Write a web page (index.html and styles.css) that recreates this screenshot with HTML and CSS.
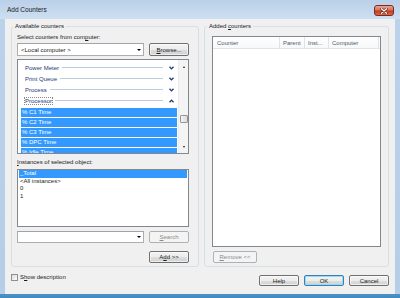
FILE: index.html
```html
<!DOCTYPE html>
<html lang="en">
<head>
	<meta charset="UTF-8">
	<title>Add Counters</title>
	<link rel="stylesheet" href="styles.css">
</head>
<body>
	<div class="window">
		<div class="titlebar">
			<span class="title">Add Counters</span>
			<span class="close">
				<svg width="8" height="6" viewBox="0 0 8 6"><path d="M1.5 0.8 L6.5 5.2 M6.5 0.8 L1.5 5.2" stroke="#5a1a10" stroke-width="2.4" stroke-linecap="round"/><path d="M1.5 0.8 L6.5 5.2 M6.5 0.8 L1.5 5.2" stroke="#fff" stroke-width="1.3" stroke-linecap="round"/></svg>
			</span>
		</div>
		<div class="frame">
			<div class="client">
				<div class="groups">
					<fieldset class="group left">
						<legend>Available counters</legend>
						<div class="label">Select counters from com<u>p</u>uter:</div>
						<div class="row top">
							<div class="combo"><span>&lt;Local computer &gt;</span><i class="drop"></i></div>
							<button class="btn"><u>B</u>rowse...</button>
						</div>
						<div class="objects">
							<div class="objlist">
								<div class="grp"><span>Power Meter</span><i class="rule"></i><svg class="chev" width="5" height="4" viewBox="0 0 5 4"><path d="M0.5 0.7 L2.5 2.9 L4.5 0.7" fill="none" stroke="#1e3a75" stroke-width="1.3"/></svg></div>
								<div class="grp"><span>Print Queue</span><i class="rule"></i><svg class="chev" width="5" height="4" viewBox="0 0 5 4"><path d="M0.5 0.7 L2.5 2.9 L4.5 0.7" fill="none" stroke="#1e3a75" stroke-width="1.3"/></svg></div>
								<div class="grp"><span>Process</span><i class="rule"></i><svg class="chev" width="5" height="4" viewBox="0 0 5 4"><path d="M0.5 0.7 L2.5 2.9 L4.5 0.7" fill="none" stroke="#1e3a75" stroke-width="1.3"/></svg></div>
								<div class="grp"><span class="focus">Processor</span><i class="rule"></i><svg class="chev" width="5" height="4" viewBox="0 0 5 4"><path d="M0.5 3.3 L2.5 1.1 L4.5 3.3" fill="none" stroke="#1e3a75" stroke-width="1.3"/></svg></div>
								<div class="items">
									<div class="item">% C1 Time</div>
									<div class="item">% C2 Time</div>
									<div class="item">% C3 Time</div>
									<div class="item">% DPC Time</div>
									<div class="item">% Idle Time</div>
								</div>
							</div>
							<div class="vscroll">
								<div class="sbtn"><i class="up"></i></div>
								<div class="track"><div class="thumb"></div></div>
								<div class="sbtn"><i class="down"></i></div>
							</div>
						</div>
						<div class="label gap"><u>I</u>nstances of selected object:</div>
						<div class="instances">
							<div class="inst sel">_Total</div>
							<div class="inst">&lt;All instances&gt;</div>
							<div class="inst">0</div>
							<div class="inst">1</div>
						</div>
						<div class="row search">
							<div class="combo"><span></span><i class="drop"></i></div>
							<button class="btn" disabled><u>S</u>earch</button>
						</div>
						<div class="row add">
							<button class="btn">A<u>d</u>d &gt;&gt;</button>
						</div>
					</fieldset>
					<fieldset class="group right">
						<legend>Added <u>c</u>ounters</legend>
						<div class="added">
							<div class="head">
								<span class="col c1">Counter</span>
								<span class="col c2">Parent</span>
								<span class="col c3">Inst...</span>
								<span class="col c4">Computer</span>
							</div>
						</div>
						<button class="btn remove" disabled><u>R</u>emove &lt;&lt;</button>
					</fieldset>
				</div>
				<div class="footer">
					<label class="check"><i class="box"></i>S<u>h</u>ow description</label>
					<div class="buttons">
						<button class="btn">Help</button>
						<button class="btn default">OK</button>
						<button class="btn">Cancel</button>
					</div>
				</div>
			</div>
		</div>
	</div>
</body>
</html>
```

FILE: styles.css
```css
*{
	box-sizing: border-box;
	margin: 0;
	padding: 0;
}
body{
	font-family: "Liberation Sans", Arial, sans-serif;
	font-size: 6px;
	color: #000;
	background: #fff;
}
.window{
	width: 400px;
	height: 298px;
	display: flex;
	flex-direction: column;
	background: #bcd2ea;
}
.titlebar{
	height: 19px;
	display: flex;
	justify-content: space-between;
	align-items: flex-start;
	padding: 0 6px 0 7px;
	background: linear-gradient(#bad0e9, #cddff1);
}
.title{
	margin-top: 6px;
	font-size: 6.5px;
	line-height: 8px;
	color: #1a1a1a;
}
.close{
	margin-top: 5px;
	width: 20px;
	height: 11px;
	display: flex;
	align-items: center;
	justify-content: center;
	border: 1px solid #7a2c1c;
	border-radius: 3px;
	background: linear-gradient(#e7a896 0%, #d66f58 45%, #c33b22 55%, #d8664a 100%);
}
.frame{
	flex: 1;
	display: flex;
	padding: 0 5px 4px;
	background: linear-gradient(#bcd2ea 0, #b6cde7 275px, #4a93c5 275px, #3f89bf 100%);
}
.client{
	flex: 1;
	display: flex;
	flex-direction: column;
	padding: 3px 6px 0;
	background: #f0f0f0;
}
.groups{
	height: 245px;
	display: flex;
	gap: 5px;
}
.group{
	border: 1px solid #d5dfe5;
	border-radius: 3px;
	min-width: 0;
	display: flex;
	flex-direction: column;
}
.group legend{
	padding: 0 2px;
	line-height: 8px;
	color: #1a1a1a;
}
.group.left{
	flex: 0 0 188px;
	padding: 0 9px 3px 5px;
}
.group.left legend{
	margin-left: -4px;
}
.group.right{
	flex: 1;
	padding: 0 7px 3px 7px;
}
.group.right legend{
	margin-left: -5px;
}
.label{
	margin-top: 3px;
	line-height: 8px;
	color: #1a1a1a;
}
.label.gap{
	margin-top: 4px;
}
.row{
	display: flex;
	justify-content: space-between;
}
.row.top{
	margin-top: 2px;
	height: 13px;
}
.row.search{
	margin-top: 4px;
	height: 12px;
}
.row.add{
	margin-top: 8px;
	height: 12px;
	justify-content: flex-end;
}
.combo{
	width: 127px;
	display: flex;
	align-items: center;
	padding-left: 3px;
	border: 1px solid #abadb3;
	border-top-color: #a0a3a9;
	background: #fff;
	color: #1a1a1a;
}
.drop{
	margin-left: auto;
	margin-right: 2px;
	width: 0;
	height: 0;
	border-left: 2px solid transparent;
	border-right: 2px solid transparent;
	border-top: 2px solid #000;
}
.btn{
	width: 40px;
	font-family: inherit;
	font-size: 6px;
	color: #1a1a1a;
	border: 1px solid #707070;
	border-radius: 2px;
	background: linear-gradient(#f3f3f3 0%, #ececec 50%, #dedede 51%, #d2d2d2 100%);
	box-shadow: inset 0 0 0 1px rgba(255,255,255,0.6);
}
.btn[disabled]{
	color: #8a8a8a;
	border-color: #adb2b5;
	background: #f4f4f4;
	box-shadow: none;
}
.btn.default{
	border-color: #3c7fb1;
	box-shadow: inset 0 0 0 1px #8fdcfa;
}
.objects{
	margin-top: 3px;
	height: 95px;
	display: flex;
	border: 1px solid #828790;
	background: #fff;
	overflow: hidden;
}
.objlist{
	flex: 1;
	min-width: 0;
	padding-top: 2px;
	overflow: hidden;
}
.grp{
	height: 11px;
	display: flex;
	align-items: center;
	padding-left: 7px;
	color: #1e3a75;
}
.grp .focus{
	outline: 1px dotted #8a8a8a;
	outline-offset: 0;
}
.rule{
	flex: 1;
	height: 1px;
	margin-left: 3px;
	background: #bccbe0;
}
.chev{
	margin: 0 4px 0 6px;
	flex: none;
}
.items{
	padding-top: 1px;
}
.item{
	height: 9px;
	line-height: 9px;
	margin: 1px 1px 0 3px;
	padding-left: 1px;
	background: #3399ff;
	color: #fff;
	white-space: nowrap;
}
.vscroll{
	flex: none;
	width: 10px;
	display: flex;
	flex-direction: column;
	background: #f4f4f4;
	border-left: 1px solid #ececec;
}
.sbtn{
	height: 12px;
	display: flex;
	align-items: center;
	justify-content: center;
}
.sbtn:first-child{
	height: 13px;
}
.up, .down{
	width: 0;
	height: 0;
	border-left: 1.5px solid transparent;
	border-right: 1.5px solid transparent;
}
.up{
	border-bottom: 2px solid #222;
}
.down{
	border-top: 2px solid #222;
}
.track{
	flex: 1;
	display: flex;
	flex-direction: column;
	align-items: center;
}
.thumb{
	width: 8px;
	height: 8px;
	margin-top: 42px;
	border: 1px solid #979797;
	border-radius: 1px;
	background: linear-gradient(to right, #f4f4f4, #dcdcdc);
}
.instances{
	margin-top: 3px;
	height: 58px;
	padding: 0 1px;
	border: 1px solid #828790;
	background: #fff;
}
.inst{
	height: 7.5px;
	line-height: 7.5px;
	padding-left: 1px;
	color: #1a1a1a;
}
.inst.sel{
	background: #3399ff;
	color: #fff;
}
.added{
	margin-top: 6px;
	height: 211px;
	border: 1px solid #828790;
	background: #fff;
}
.head{
	height: 12px;
	display: flex;
	border-bottom: 1px solid #e2e3e5;
	background: linear-gradient(#fff, #f7f8f9);
	color: #4d5a6a;
}
.col{
	display: flex;
	align-items: center;
	padding-left: 3px;
	border-right: 1px solid #e2e3e5;
	white-space: nowrap;
}
.c1{
	width: 67px;
	padding-left: 4px;
}
.c2{
	width: 25px;
}
.c3{
	width: 24px;
}
.c4{
	width: 50px;
}
.remove{
	margin-top: 4px;
	height: 12px;
	width: 44px;
	margin-left: 1px;
}
.footer{
	margin-top: 8px;
	height: 11px;
	display: flex;
	align-items: flex-start;
}
.check{
	margin-top: -2px;
	height: 8px;
	display: flex;
	align-items: center;
	line-height: 8px;
	color: #1a1a1a;
}
.box{
	width: 7px;
	height: 7px;
	margin-right: 2px;
	border: 1px solid #8e8f8f;
	background: linear-gradient(135deg, #dcdcdc, #fbfbfb);
}
.buttons{
	margin-left: auto;
	display: flex;
	gap: 5px;
	height: 11px;
}
```
